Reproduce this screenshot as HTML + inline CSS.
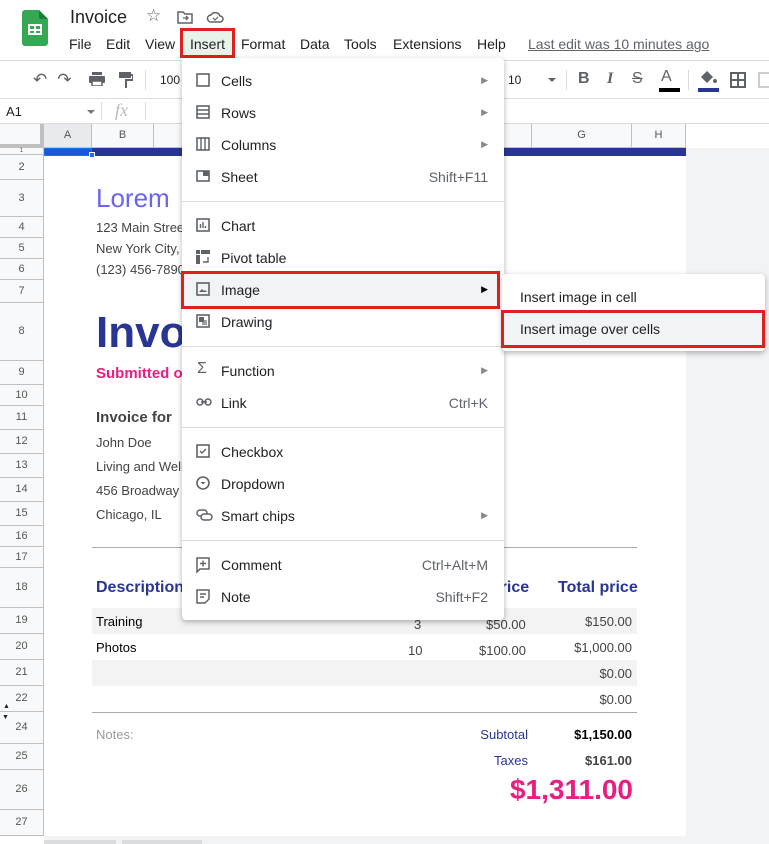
<!DOCTYPE html>
<html><head><meta charset="utf-8"><style>
*{box-sizing:border-box;margin:0;padding:0}
body{width:769px;height:844px;overflow:hidden;background:#fff;font-family:"Liberation Sans",Arial,sans-serif;position:relative;color:#202124}
.a{position:absolute}
.menu span{position:absolute;top:36px;font-size:14px;color:#202124}
.rh{position:absolute;left:0;width:44px;border-bottom:1px solid #c0c0c0;background:#f8f9fa;font-size:11px;color:#555;text-align:center;border-right:1px solid #c0c0c0}
.ch{position:absolute;top:124px;height:24px;border-right:1px solid #c0c0c0;font-size:11px;color:#555;text-align:center;line-height:23px;background:#f8f9fa}
.mi{position:absolute;left:182px;width:322px;height:32px;font-size:14px;color:#202124}
.mi .t{position:absolute;left:39px;top:8px}
.mi .s{position:absolute;right:16px;top:8px;color:#5f6368}
.mi .r{position:absolute;right:16px;top:10px;font-size:9px;color:#888}
.mi svg{position:absolute;left:14px;top:8px}
.sep{position:absolute;left:182px;width:322px;height:1px;background:#dadce0}
.inv{position:absolute;font-size:13px;color:#434343}
</style></head><body>
<!-- header -->
<svg class="a" style="left:22px;top:10px" width="26" height="36" viewBox="0 0 26 36"><path d="M3 0h14l9 9v24a3 3 0 0 1-3 3H3a3 3 0 0 1-3-3V3a3 3 0 0 1 3-3z" fill="#34a853"/><path d="M17 0l9 9h-7a2 2 0 0 1-2-2z" fill="#188038"/><rect x="6" y="14" width="14" height="11" fill="#fff"/><rect x="8" y="16" width="4" height="3" fill="#34a853"/><rect x="14" y="16" width="4" height="3" fill="#34a853"/><rect x="8" y="21" width="4" height="2" fill="#34a853"/><rect x="14" y="21" width="4" height="2" fill="#34a853"/></svg>
<div class="a" style="left:70px;top:7px;font-size:18px">Invoice</div>
<div class="a" style="left:146px;top:6px;font-size:17px;color:#5f6368">☆</div>
<svg class="a" style="left:177px;top:10px" width="16" height="14"><path d="M1 2h5l2 2h7v9H1z" fill="none" stroke="#5f6368" stroke-width="1.5"/><path d="M6 8h5M9 6l2 2-2 2" stroke="#5f6368" fill="none" stroke-width="1.3"/></svg>
<svg class="a" style="left:206px;top:11px" width="18" height="12"><path d="M5 11h9a3 3 0 0 0 0-6 5 5 0 0 0-9-1 3.5 3.5 0 0 0 0 7z" fill="none" stroke="#5f6368" stroke-width="1.5"/><path d="M7 7l2 2 3-3" stroke="#5f6368" fill="none" stroke-width="1.2"/></svg>
<div class="menu">
<span style="left:69px">File</span><span style="left:106px">Edit</span><span style="left:145px">View</span>
<div class="a" style="left:180px;top:28px;width:55px;height:30px;border:3px solid #e0201f;background:#e6f4ea"></div>
<span style="left:190px">Insert</span><span style="left:241px">Format</span><span style="left:300px">Data</span><span style="left:344px">Tools</span><span style="left:393px">Extensions</span><span style="left:477px">Help</span>
<span style="left:528px;color:#5f6368;text-decoration:underline">Last edit was 10 minutes ago</span>
</div>
<div class="a" style="left:0;top:60px;width:769px;height:1px;background:#dadce0"></div>
<!-- toolbar -->
<div class="a" style="left:33px;top:70px;font-size:17px;color:#5f6368;letter-spacing:10px">↶↷</div>
<svg class="a" style="left:89px;top:72px" width="16" height="14"><rect x="0" y="4" width="16" height="7" rx="1" fill="#5f6368"/><rect x="3" y="0" width="10" height="3" fill="#5f6368"/><rect x="3" y="9" width="10" height="5" fill="#fff" stroke="#5f6368" stroke-width="1.5"/></svg>
<svg class="a" style="left:119px;top:72px" width="14" height="16"><rect x="0" y="0" width="12" height="6" fill="#5f6368"/><path d="M12 3h2v5H7v8" stroke="#5f6368" stroke-width="2" fill="none"/></svg>
<div class="a" style="left:145px;top:70px;width:1px;height:20px;background:#dadce0"></div>
<div class="a" style="left:160px;top:73px;font-size:12px">100</div>
<div class="a" style="left:508px;top:73px;font-size:12px">10</div>
<div class="a" style="left:548px;top:78px;border:4px solid transparent;border-top:4px solid #5f6368"></div>
<div class="a" style="left:566px;top:70px;width:1px;height:20px;background:#dadce0"></div>
<div class="a" style="left:578px;top:70px;font-size:16px;font-weight:bold;color:#5f6368">B</div>
<div class="a" style="left:607px;top:70px;font-size:16px;font-style:italic;font-weight:bold;color:#5f6368;font-family:'Liberation Serif',serif">I</div>
<div class="a" style="left:632px;top:70px;font-size:16px;color:#5f6368;text-decoration:line-through">S</div>
<div class="a" style="left:661px;top:68px;font-size:16px;color:#5f6368">A</div>
<div class="a" style="left:659px;top:88px;width:21px;height:4px;background:#000"></div>
<div class="a" style="left:688px;top:70px;width:1px;height:20px;background:#dadce0"></div>
<svg class="a" style="left:698px;top:69px" width="20" height="16"><path d="M3 8l6-6 6 6-6 6z" fill="#5f6368"/><circle cx="17" cy="12" r="2" fill="#5f6368"/></svg>
<div class="a" style="left:698px;top:88px;width:21px;height:4px;background:#283593"></div>
<svg class="a" style="left:730px;top:72px" width="16" height="16"><rect x="1" y="1" width="14" height="14" fill="none" stroke="#5f6368" stroke-width="2"/><path d="M8 1v14M1 8h14" stroke="#5f6368" stroke-width="2"/></svg>
<div class="a" style="left:758px;top:72px;width:11px;height:16px;border:2px solid #ccc;border-right:none"></div>
<div class="a" style="left:0;top:98px;width:769px;height:1px;background:#dadce0"></div>
<!-- formula bar -->
<div class="a" style="left:6px;top:104px;font-size:13px">A1</div>
<div class="a" style="left:87px;top:110px;border:4px solid transparent;border-top:4px solid #777"></div>
<div class="a" style="left:101px;top:102px;width:1px;height:18px;background:#dadce0"></div>
<div class="a" style="left:115px;top:100px;font-size:18px;font-style:italic;color:#bbb;font-family:'Liberation Serif',serif">fx</div>
<div class="a" style="left:145px;top:102px;width:1px;height:18px;background:#dadce0"></div>
<div class="a" style="left:0;top:123px;width:769px;height:1px;background:#dadce0"></div>
<!-- grid bg -->
<div class="a" style="left:44px;top:148px;width:725px;height:696px;background:#f1f3f4"></div>
<div class="a" style="left:44px;top:148px;width:642px;height:688px;background:#fff"></div>
<div class="a" style="left:0;top:124px;width:44px;height:24px;background:#f8f9fa;border-right:4px solid #c0c0c0;border-bottom:4px solid #c0c0c0"></div>
<div class="ch" style="left:44px;width:48px;background:#e8eaed">A</div>
<div class="ch" style="left:92px;width:62px">B</div>
<div class="ch" style="left:154px;width:378px"></div>
<div class="ch" style="left:532px;width:100px">G</div>
<div class="ch" style="left:632px;width:54px">H</div>
<div class="a" style="left:44px;top:147px;width:642px;height:1px;background:#c0c0c0"></div>
<div class="a" style="left:44px;top:148px;width:642px;height:8px;background:#283593"></div>
<div class="a" style="left:44px;top:148px;width:48px;height:8px;background:#1a56d6;border:1px solid #1a73e8"></div>
<div class="a" style="left:89px;top:152px;width:6px;height:6px;background:#1a73e8;border:1px solid #fff"></div>
<!-- row headers -->
<div class="rh" style="top:148px;height:7px;font-size:6px;line-height:6px">1</div>
<div class="rh" style="top:155px;height:25px;line-height:24px">2</div>
<div class="rh" style="top:180px;height:37px;line-height:36px">3</div>
<div class="rh" style="top:217px;height:21px;line-height:20px">4</div>
<div class="rh" style="top:238px;height:21px;line-height:20px">5</div>
<div class="rh" style="top:259px;height:21px;line-height:20px">6</div>
<div class="rh" style="top:280px;height:23px;line-height:22px">7</div>
<div class="rh" style="top:303px;height:58px;line-height:57px">8</div>
<div class="rh" style="top:361px;height:24px;line-height:23px">9</div>
<div class="rh" style="top:385px;height:21px;line-height:20px">10</div>
<div class="rh" style="top:406px;height:24px;line-height:23px">11</div>
<div class="rh" style="top:430px;height:24px;line-height:23px">12</div>
<div class="rh" style="top:454px;height:24px;line-height:23px">13</div>
<div class="rh" style="top:478px;height:24px;line-height:23px">14</div>
<div class="rh" style="top:502px;height:24px;line-height:23px">15</div>
<div class="rh" style="top:526px;height:21px;line-height:20px">16</div>
<div class="rh" style="top:547px;height:21px;line-height:20px">17</div>
<div class="rh" style="top:568px;height:40px;line-height:39px">18</div>
<div class="rh" style="top:608px;height:26px;line-height:25px">19</div>
<div class="rh" style="top:634px;height:26px;line-height:25px">20</div>
<div class="rh" style="top:660px;height:26px;line-height:25px">21</div>
<div class="rh" style="top:686px;height:26px;line-height:25px">22</div>
<div class="rh" style="top:712px;height:32px;line-height:31px">24</div>
<div class="rh" style="top:744px;height:26px;line-height:25px">25</div>
<div class="rh" style="top:770px;height:40px;line-height:39px">26</div>
<div class="rh" style="top:810px;height:26px;line-height:25px">27</div>
<div class="a" style="left:3px;top:703px;font-size:7px">▲</div>
<div class="a" style="left:2px;top:714px;font-size:7px">▼</div>
<!-- invoice -->
<div class="a" style="left:96px;top:183px;font-size:26px;color:#6c63f0">Lorem</div>
<div class="inv" style="left:96px;top:220px">123 Main Street</div>
<div class="inv" style="left:96px;top:241px">New York City,</div>
<div class="inv" style="left:96px;top:262px">(123) 456-7890</div>
<div class="a" style="left:96px;top:308px;font-size:44px;font-weight:bold;color:#283593">Invoice</div>
<div class="a" style="left:96px;top:365px;font-size:15px;font-weight:bold;color:#e91e83">Submitted on</div>
<div class="a" style="left:96px;top:409px;font-size:15px;font-weight:bold;color:#434343">Invoice for</div>
<div class="inv" style="left:96px;top:435px">John Doe</div>
<div class="inv" style="left:96px;top:459px">Living and Wellness</div>
<div class="inv" style="left:96px;top:483px">456 Broadway</div>
<div class="inv" style="left:96px;top:507px">Chicago, IL</div>
<div class="a" style="left:92px;top:547px;width:545px;height:1px;background:#aaa"></div>
<div class="a" style="left:96px;top:579px;font-size:16px;font-weight:bold;color:#283593">Description</div>
<div class="a" style="left:490px;top:579px;font-size:16px;font-weight:bold;color:#283593">Price</div>
<div class="a" style="left:558px;top:579px;font-size:16px;font-weight:bold;color:#283593">Total price</div>
<div class="a" style="left:92px;top:608px;width:545px;height:26px;background:#f3f3f3"></div>
<div class="a" style="left:92px;top:660px;width:545px;height:26px;background:#f3f3f3"></div>
<div class="a" style="left:96px;top:614px;font-size:13px;color:#000">Training</div>
<div class="a" style="left:96px;top:640px;font-size:13px;color:#000">Photos</div>
<div class="inv" style="left:414px;top:617px">3</div>
<div class="inv" style="left:408px;top:643px">10</div>
<div class="inv" style="left:486px;top:617px">$50.00</div>
<div class="inv" style="left:479px;top:643px">$100.00</div>
<div class="inv" style="right:137px;top:614px">$150.00</div>
<div class="inv" style="right:137px;top:640px">$1,000.00</div>
<div class="inv" style="right:137px;top:666px">$0.00</div>
<div class="inv" style="right:137px;top:692px">$0.00</div>
<div class="a" style="left:92px;top:712px;width:545px;height:1px;background:#aaa"></div>
<div class="a" style="left:96px;top:727px;font-size:13px;color:#999">Notes:</div>
<div class="a" style="right:241px;top:727px;font-size:13px;color:#283593">Subtotal</div>
<div class="a" style="right:137px;top:727px;font-size:13px;font-weight:bold;color:#000">$1,150.00</div>
<div class="a" style="right:241px;top:753px;font-size:13px;color:#283593">Taxes</div>
<div class="a" style="right:137px;top:753px;font-size:13px;font-weight:bold;color:#434343">$161.00</div>
<div class="a" style="right:136px;top:774px;font-size:28px;font-weight:bold;color:#e91e83">$1,311.00</div>
<div class="a" style="left:44px;top:840px;width:72px;height:4px;background:#dadce0"></div>
<div class="a" style="left:122px;top:840px;width:80px;height:4px;background:#dadce0"></div>
<!-- menu -->
<div class="a" style="left:182px;top:58px;width:322px;height:562px;background:#fff;border-radius:4px;box-shadow:0 2px 6px rgba(0,0,0,.3)"></div>
<div class="mi" style="top:65px"><svg width="14" height="14"><rect x="1" y="1" width="12" height="12" fill="none" stroke="#5f6368" stroke-width="1.6"/></svg><span class="t">Cells</span><span class="r">▶</span></div>
<div class="mi" style="top:97px"><svg width="14" height="14"><rect x="1" y="1" width="12" height="12" fill="none" stroke="#5f6368" stroke-width="1.6"/><path d="M1 5h12M1 9h12" stroke="#5f6368" stroke-width="1.4"/></svg><span class="t">Rows</span><span class="r">▶</span></div>
<div class="mi" style="top:129px"><svg width="14" height="14"><rect x="1" y="1" width="12" height="12" fill="none" stroke="#5f6368" stroke-width="1.6"/><path d="M5 1v12M9 1v12" stroke="#5f6368" stroke-width="1.4"/></svg><span class="t">Columns</span><span class="r">▶</span></div>
<div class="mi" style="top:161px"><svg width="14" height="14"><rect x="1" y="2" width="12" height="10" fill="none" stroke="#5f6368" stroke-width="1.6"/><rect x="7" y="2" width="6" height="5" fill="#5f6368"/></svg><span class="t">Sheet</span><span class="s">Shift+F11</span></div>
<div class="sep" style="top:201px"></div>
<div class="mi" style="top:210px"><svg width="14" height="14"><rect x="1" y="1" width="12" height="12" fill="none" stroke="#5f6368" stroke-width="1.6"/><path d="M4.5 10V6M7 10V4M9.5 10V8" stroke="#5f6368" stroke-width="1.4"/></svg><span class="t">Chart</span></div>
<div class="mi" style="top:242px"><svg width="14" height="14"><rect x="0" y="0" width="4" height="4" fill="#5f6368"/><rect x="5" y="0" width="9" height="4" fill="#5f6368"/><rect x="0" y="5" width="4" height="9" fill="#5f6368"/><path d="M7 12h5V7" stroke="#5f6368" stroke-width="1.4" fill="none"/></svg><span class="t">Pivot table</span></div>
<div class="a" style="left:182px;top:274px;width:316px;height:33px;background:#f1f3f4"></div>
<div class="mi" style="top:274px"><svg width="14" height="14"><rect x="1" y="1" width="12" height="12" fill="none" stroke="#5f6368" stroke-width="1.6"/><path d="M3 10l3-3 2 2 1-1 2 2z" fill="#5f6368"/></svg><span class="t">Image</span><span class="r" style="color:#000">▶</span></div>
<div class="a" style="left:181px;top:271px;width:319px;height:38px;border:3px solid #e0201f"></div>
<div class="mi" style="top:306px"><svg width="14" height="14"><rect x="1" y="1" width="12" height="12" fill="none" stroke="#5f6368" stroke-width="1.6"/><rect x="3" y="3" width="5" height="5" fill="#5f6368"/><rect x="6" y="6" width="5" height="5" fill="#5f6368" opacity=".6"/></svg><span class="t">Drawing</span></div>
<div class="sep" style="top:346px"></div>
<div class="mi" style="top:355px"><span class="a" style="left:15px;top:5px;font-size:16px;color:#5f6368">Σ</span><span class="t">Function</span><span class="r">▶</span></div>
<div class="mi" style="top:387px"><svg width="16" height="14"><rect x="1" y="4" width="6" height="6" rx="3" fill="none" stroke="#5f6368" stroke-width="1.5"/><rect x="9" y="4" width="6" height="6" rx="3" fill="none" stroke="#5f6368" stroke-width="1.5"/><path d="M5 7h6" stroke="#5f6368" stroke-width="1.5"/></svg><span class="t">Link</span><span class="s">Ctrl+K</span></div>
<div class="sep" style="top:427px"></div>
<div class="mi" style="top:436px"><svg width="14" height="14"><rect x="1" y="1" width="12" height="12" fill="none" stroke="#5f6368" stroke-width="1.6"/><path d="M4 7l2 2 4-4" stroke="#5f6368" stroke-width="1.4" fill="none"/></svg><span class="t">Checkbox</span></div>
<div class="mi" style="top:468px"><svg width="14" height="14"><circle cx="7" cy="7" r="6" fill="none" stroke="#5f6368" stroke-width="1.6"/><path d="M4.5 6l2.5 2.5L9.5 6z" fill="#5f6368"/></svg><span class="t">Dropdown</span></div>
<div class="mi" style="top:500px"><svg width="18" height="14"><rect x="1" y="2" width="10" height="6" rx="3" fill="none" stroke="#5f6368" stroke-width="1.5"/><rect x="5" y="6" width="11" height="6" rx="3" fill="#fff" stroke="#5f6368" stroke-width="1.5"/></svg><span class="t">Smart chips</span><span class="r">▶</span></div>
<div class="sep" style="top:540px"></div>
<div class="mi" style="top:549px"><svg width="14" height="16"><path d="M1 1h12v11H4l-3 3z" fill="none" stroke="#5f6368" stroke-width="1.5"/><path d="M7 3.5v6M4 6.5h6" stroke="#5f6368" stroke-width="1.4"/></svg><span class="t">Comment</span><span class="s">Ctrl+Alt+M</span></div>
<div class="mi" style="top:581px"><svg width="14" height="16"><path d="M1 1h12v9l-4 4H1z" fill="none" stroke="#5f6368" stroke-width="1.5"/><path d="M4 5h6M4 8h4" stroke="#5f6368" stroke-width="1.4"/></svg><span class="t">Note</span><span class="s">Shift+F2</span></div>
<!-- submenu -->
<div class="a" style="left:502px;top:274px;width:263px;height:77px;background:#fff;border-radius:4px;box-shadow:0 2px 6px rgba(0,0,0,.3)"></div>
<div class="a" style="left:502px;top:312px;width:262px;height:34px;background:#f1f3f4"></div>
<div class="a" style="left:520px;top:289px;font-size:14px">Insert image in cell</div>
<div class="a" style="left:520px;top:321px;font-size:14px">Insert image over cells</div>
<div class="a" style="left:501px;top:310px;width:264px;height:38px;border:3px solid #e0201f"></div>
</body></html>
